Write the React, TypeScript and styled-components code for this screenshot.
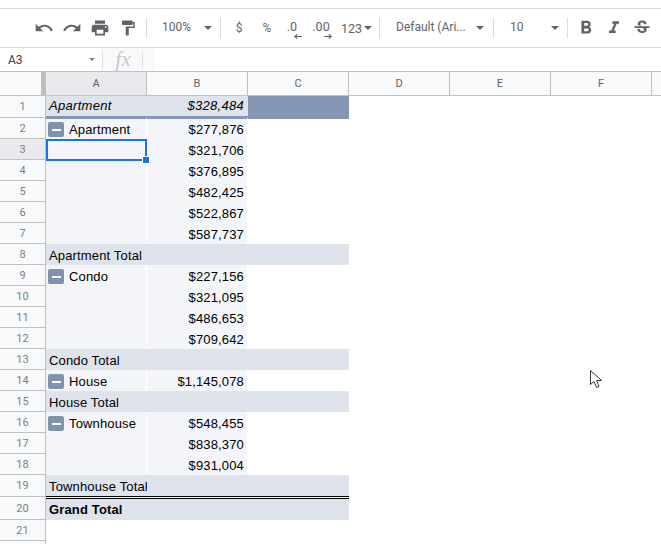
import React from "react";
import styled, { createGlobalStyle } from "styled-components";

const Global = createGlobalStyle`
  html, body { margin: 0; padding: 0; background: #fff; overflow: hidden; }
  #root { width: 661px; height: 544px; overflow: hidden; }
`;

const Page = styled.div`
  position: relative;
  width: 661px;
  height: 544px;
  overflow: hidden;
  padding-top: 8px;
  box-sizing: border-box;
  font-family: "Liberation Sans", Arial, sans-serif;
`;

const Toolbar = styled.div`
  display: flex;
  align-items: center;
  height: 38px;
  padding-left: 30px;
  border-top: 1px solid #dadce0;
  border-bottom: 1px solid #dadce0;
  box-sizing: content-box;
  font-family: Roboto, sans-serif;
  color: #5f6368;
  white-space: nowrap;
`;

const IconSlot = styled.div`
  flex: none;
  width: 28px;
  height: 24px;
  display: flex;
  align-items: center;
  justify-content: center;
  position: relative;
  font-size: 12px;
`;

const Divider = styled.div<{ $left?: number; $right?: number }>`
  flex: none;
  width: 1px;
  height: 20px;
  background: #dadce0;
  margin-left: ${(p) => p.$left ?? 0}px;
  margin-right: ${(p) => p.$right ?? 0}px;
`;

const Select = styled.div<{ $w: number; $pad: number; $caret: number }>`
  flex: none;
  width: ${(p) => p.$w}px;
  padding-left: ${(p) => p.$pad}px;
  padding-right: ${(p) => p.$caret}px;
  box-sizing: border-box;
  display: flex;
  justify-content: space-between;
  align-items: center;
  font-size: 12px;
  height: 24px;
`;

const SelectLabel = styled.span`
  position: relative;
  top: -1px;
`;

const Caret = styled.span<{ $color?: string; $half?: number }>`
  display: inline-block;
  width: 0;
  height: 0;
  border-left: ${(p) => p.$half ?? 4}px solid transparent;
  border-right: ${(p) => p.$half ?? 4}px solid transparent;
  border-top: ${(p) => p.$half ?? 4}px solid ${(p) => p.$color ?? "#5f6368"};
`;

const Decimal = styled.span<{ $shift: number }>`
  position: relative;
  top: -2px;
  left: ${(p) => p.$shift}px;
  font-size: 12.5px;
  color: #5f6368;
`;

const DecimalArrow = styled.svg<{ $right: number }>`
  position: absolute;
  bottom: 1px;
  right: ${(p) => p.$right}px;
`;

const NumberFormat = styled.div`
  flex: none;
  width: 42px;
  padding-left: 4px;
  box-sizing: border-box;
  display: flex;
  align-items: center;
  gap: 2px;
  font-size: 12.5px;
  color: #5f6368;
`;

const FormulaBar = styled.div`
  display: flex;
  height: 23px;
  border-bottom: 1px solid #c0c0c0;
  align-items: stretch;
`;

const NameBox = styled.div`
  flex: none;
  width: 102px;
  padding: 0 7px 0 8px;
  box-sizing: border-box;
  display: flex;
  align-items: center;
  justify-content: space-between;
  font-size: 12px;
  color: #3c4043;
  font-family: Roboto, sans-serif;
`;

const FxBox = styled.div`
  flex: none;
  width: 53px;
  background: #f8f9fa;
  display: flex;
  align-items: center;
  justify-content: space-between;
`;

const FxDivider = styled.div`
  width: 1px;
  height: 16px;
  background: #dadce0;
`;

const FxText = styled.span`
  font-family: "Liberation Serif", serif;
  font-style: italic;
  font-size: 21px;
  color: #c8cacc;
  margin-left: 1px;
`;

const HeaderRow = styled.div`
  display: flex;
  height: 24px;
  background: #f8f9fa;
  border-bottom: 1px solid #c0c0c0;
  box-sizing: border-box;
`;

const Corner = styled.div`
  flex: none;
  width: 46px;
  box-sizing: border-box;
  border-right: 5px solid #bdbdbd;
`;

const ColHead = styled.div<{ $active?: boolean }>`
  flex: none;
  width: 101px;
  box-sizing: border-box;
  border-right: 1px solid #c0c0c0;
  display: flex;
  align-items: center;
  justify-content: center;
  font-family: Roboto, sans-serif;
  font-size: 11px;
  color: #5f6368;
  background: ${(p) => (p.$active ? "#e8eaed" : "transparent")};
`;

const Row = styled.div<{ $h: number }>`
  display: flex;
  height: ${(p) => p.$h}px;
`;

const RowHead = styled.div<{ $active?: boolean }>`
  flex: none;
  width: 46px;
  box-sizing: border-box;
  border-right: 1px solid #c0c0c0;
  border-bottom: 1px solid #c0c0c0;
  background: ${(p) => (p.$active ? "#e8eaed" : "#f8f9fa")};
  display: flex;
  align-items: center;
  justify-content: center;
  font-family: Roboto, sans-serif;
  font-size: 11px;
  color: #7d8084;
`;

const Cell = styled.div<{
  $bg?: string;
  $right?: boolean;
  $bold?: boolean;
  $line?: boolean;
  $topBand?: boolean;
}>`
  flex: none;
  width: 101px;
  box-sizing: border-box;
  display: flex;
  align-items: center;
  gap: 5px;
  padding: 2px 3px 0 3px;
  font-size: 13px;
  letter-spacing: 0.15px;
  color: #000;
  white-space: nowrap;
  overflow: hidden;
  justify-content: ${(p) => (p.$right ? "flex-end" : "flex-start")};
  background: ${(p) => p.$bg ?? "transparent"};
  font-weight: ${(p) => (p.$bold ? 700 : 400)};
  border-bottom: ${(p) => (p.$line ? "1px solid #000" : "none")};
  box-shadow: ${(p) => (p.$topBand ? "inset 0 1px 0 #8496b4" : "none")};
`;

const GroupCell = styled(Cell)`
  background: #f3f5f9;
  border-right: 1px solid #fff;
`;

const HeadingCell = styled(Cell)`
  font-style: italic;
  letter-spacing: 0.3px;
  padding: 0 4px 2px 3px;
  border-bottom: 2px solid #8496b4;
`;

const GrandCell = styled(Cell)`
  box-shadow: inset 0 1px 0 #fff, inset 0 2px 0 #000;
`;

const Collapse = styled.span`
  flex: none;
  width: 16px;
  height: 15px;
  margin-left: -1px;
  border-radius: 2px;
  background: #8093ae;
  display: flex;
  align-items: center;
  justify-content: center;
`;

const CollapseBar = styled.span`
  display: block;
  width: 9px;
  height: 2px;
  background: #fff;
`;

const SelectionBox = styled.div`
  position: absolute;
  left: 46px;
  top: 139px;
  width: 101px;
  height: 22px;
  box-sizing: border-box;
  border: 2px solid #1a73e8;
`;

const SelectionHandle = styled.div`
  position: absolute;
  right: -4px;
  bottom: -4px;
  width: 6px;
  height: 6px;
  background: #1a73e8;
  outline: 1px solid #fff;
`;

const Pointer = styled.svg`
  position: absolute;
  left: 589px;
  top: 369px;
`;

const Icon = ({ d, size = 20 }: { d: string; size?: number }) => (
  <svg width={size} height={size} viewBox="0 0 24 24" fill="#5f6368">
    <path d={d} />
  </svg>
);

const icons = {
  undo: "M12.5 8c-2.65 0-5.05.99-6.9 2.6L2 7v9h9l-3.62-3.62c1.39-1.16 3.16-1.88 5.12-1.88 3.54 0 6.55 2.31 7.6 5.5l2.37-.78C21.08 11.03 17.15 8 12.5 8z",
  redo: "M18.4 10.6C16.55 8.99 14.15 8 11.5 8c-4.65 0-8.58 3.03-9.96 7.22L3.9 16c1.05-3.19 4.05-5.5 7.6-5.5 1.95 0 3.73.72 5.12 1.88L13 16h9V7l-3.6 3.6z",
  print:
    "M19 8H5c-1.66 0-3 1.34-3 3v6h4v4h12v-4h4v-6c0-1.66-1.34-3-3-3zm-3 11H8v-5h8v5zm3-7c-.55 0-1-.45-1-1s.45-1 1-1 1 .45 1 1-.45 1-1 1zm-1-9H6v4h12V3z",
  paint:
    "M18 4V3c0-.55-.45-1-1-1H5c-.55 0-1 .45-1 1v4c0 .55.45 1 1 1h12c.55 0 1-.45 1-1V6h1v4H9v11c0 .55.45 1 1 1h2c.55 0 1-.45 1-1v-9h8V4h-3z",
  bold: "M15.6 10.79c.97-.67 1.65-1.77 1.65-2.79 0-2.26-1.75-4-4-4H7v14h7.04c2.09 0 3.71-1.7 3.71-3.79 0-1.52-.86-2.82-2.15-3.42zM10 6.5h3c.83 0 1.5.67 1.5 1.5s-.67 1.5-1.5 1.5h-3v-3zm3.5 9H10v-3h3.5c.83 0 1.5.67 1.5 1.5s-.67 1.5-1.5 1.5z",
  italic: "M10 4v3h2.21l-3.42 8H6v3h8v-3h-2.21l3.42-8H18V4z",
  strike:
    "M7.24 8.75c-.26-.48-.39-1.03-.39-1.67 0-.61.13-1.16.4-1.67.26-.5.63-.93 1.11-1.29.48-.35 1.05-.63 1.7-.83.66-.19 1.39-.29 2.18-.29.81 0 1.54.11 2.21.34.66.22 1.23.54 1.69.94.47.4.83.88 1.08 1.43.25.55.38 1.15.38 1.81h-3.01c0-.31-.05-.59-.15-.85-.09-.27-.24-.49-.44-.68-.2-.19-.45-.33-.75-.44-.3-.1-.66-.16-1.06-.16-.39 0-.74.04-1.03.13-.29.09-.53.21-.72.36-.19.16-.34.34-.44.55-.1.21-.15.43-.15.66 0 .48.25.88.74 1.21.38.25.77.48 1.41.7H7.39c-.05-.08-.11-.17-.15-.25zM21 12v-2H3v2h9.62c.18.07.4.14.55.2.37.17.66.34.87.51.21.17.35.36.43.57.07.2.11.43.11.69 0 .23-.05.45-.14.66-.09.2-.23.38-.42.53-.19.15-.42.26-.71.35-.29.08-.63.13-1.01.13-.43 0-.83-.04-1.18-.13s-.66-.23-.91-.42c-.25-.19-.45-.44-.59-.75-.14-.31-.25-.76-.25-1.21H6.4c0 .55.08 1.13.24 1.58.16.45.37.85.65 1.21.28.35.6.66.98.92.37.26.78.48 1.22.65.44.17.9.3 1.38.39.48.08.96.13 1.44.13.8 0 1.53-.09 2.18-.28s1.21-.45 1.67-.79c.46-.34.82-.77 1.07-1.27s.38-1.07.38-1.71c0-.6-.1-1.14-.31-1.61-.05-.11-.11-.23-.17-.33H21z",
};

type Item =
  | { kind: "group"; label: string; value: string }
  | { kind: "value"; value: string }
  | { kind: "total"; label: string };

const items: Item[] = [
  { kind: "group", label: "Apartment", value: "$277,876" },
  { kind: "value", value: "$321,706" },
  { kind: "value", value: "$376,895" },
  { kind: "value", value: "$482,425" },
  { kind: "value", value: "$522,867" },
  { kind: "value", value: "$587,737" },
  { kind: "total", label: "Apartment Total" },
  { kind: "group", label: "Condo", value: "$227,156" },
  { kind: "value", value: "$321,095" },
  { kind: "value", value: "$486,653" },
  { kind: "value", value: "$709,642" },
  { kind: "total", label: "Condo Total" },
  { kind: "group", label: "House", value: "$1,145,078" },
  { kind: "total", label: "House Total" },
  { kind: "group", label: "Townhouse", value: "$548,455" },
  { kind: "value", value: "$838,370" },
  { kind: "value", value: "$931,004" },
];

const TOTAL_BG = "#dfe3ec";

const DecimalIcon = ({ text, flip, shift, right }: { text: string; flip?: boolean; shift: number; right: number }) => (
  <IconSlot>
    <Decimal $shift={shift}>{text}</Decimal>
    <DecimalArrow $right={right} width="8" height="5" viewBox="0 0 8 5" fill="none" stroke="#5f6368" strokeWidth="1.2">
      {flip ? <path d="M0 2.5h7M4.8 .4L7.2 2.5 4.8 4.6" /> : <path d="M8 2.5H1M3.2 .4L.8 2.5 3.2 4.6" />}
    </DecimalArrow>
  </IconSlot>
);

export default function App() {
  return (
    <Page>
      <Global />
      <Toolbar>
        <IconSlot><Icon d={icons.undo} /></IconSlot>
        <IconSlot><Icon d={icons.redo} /></IconSlot>
        <IconSlot><Icon d={icons.print} /></IconSlot>
        <IconSlot><Icon d={icons.paint} size={18} /></IconSlot>
        <Divider $left={4} />
        <Select $w={73} $pad={15} $caret={8}>
          <SelectLabel>100%</SelectLabel>
          <Caret />
        </Select>
        <Divider $right={4} />
        <IconSlot>$</IconSlot>
        <IconSlot>%</IconSlot>
        <DecimalIcon text=".0" shift={-3} right={7} />
        <DecimalIcon text=".00" flip shift={-2} right={5} />
        <NumberFormat>
          <span>123</span>
          <Caret />
        </NumberFormat>
        <Divider />
        <Select $w={113} $pad={16} $caret={9}>
          <SelectLabel>Default (Ari...</SelectLabel>
          <Caret />
        </Select>
        <Divider />
        <Select $w={73} $pad={16} $caret={8}>
          <SelectLabel>10</SelectLabel>
          <Caret />
        </Select>
        <Divider $right={4} />
        <IconSlot><Icon d={icons.bold} size={22} /></IconSlot>
        <IconSlot><Icon d={icons.italic} /></IconSlot>
        <IconSlot><Icon d={icons.strike} /></IconSlot>
      </Toolbar>

      <FormulaBar>
        <NameBox>
          <span>A3</span>
          <Caret $color="#80868b" $half={3} />
        </NameBox>
        <FxBox>
          <FxDivider />
          <FxText>fx</FxText>
          <FxDivider />
          <span />
        </FxBox>
      </FormulaBar>

      <HeaderRow>
        <Corner />
        <ColHead $active>A</ColHead>
        <ColHead>B</ColHead>
        <ColHead>C</ColHead>
        <ColHead>D</ColHead>
        <ColHead>E</ColHead>
        <ColHead>F</ColHead>
      </HeaderRow>

      <Row $h={22}>
        <RowHead>1</RowHead>
        <HeadingCell $bg={TOTAL_BG}>Apartment</HeadingCell>
        <HeadingCell $bg={TOTAL_BG} $right>$328,484</HeadingCell>
        <Cell $bg="#8496b4" />
      </Row>

      {items.map((item, i) => {
        const n = i + 2;
        const band = i === 0;
        if (item.kind === "total") {
          return (
            <Row $h={21} key={n}>
              <RowHead>{n}</RowHead>
              <Cell $bg={TOTAL_BG}>{item.label}</Cell>
              <Cell $bg={TOTAL_BG} />
              <Cell $bg={TOTAL_BG} />
            </Row>
          );
        }
        return (
          <Row $h={21} key={n}>
            <RowHead $active={n === 3}>{n}</RowHead>
            <GroupCell $topBand={band}>
              {item.kind === "group" && (
                <>
                  <Collapse><CollapseBar /></Collapse>
                  <span>{item.label}</span>
                </>
              )}
            </GroupCell>
            <GroupCell $right $topBand={band}>{item.value}</GroupCell>
            {band && <Cell $topBand />}
          </Row>
        );
      })}

      <Row $h={22}>
        <RowHead>19</RowHead>
        <Cell $bg={TOTAL_BG} $line>Townhouse Total</Cell>
        <Cell $bg={TOTAL_BG} $line />
        <Cell $bg={TOTAL_BG} $line />
      </Row>
      <Row $h={23}>
        <RowHead>20</RowHead>
        <GrandCell $bg={TOTAL_BG} $bold>Grand Total</GrandCell>
        <GrandCell $bg={TOTAL_BG} />
        <GrandCell $bg={TOTAL_BG} />
      </Row>
      <Row $h={21}>
        <RowHead>21</RowHead>
      </Row>
      <Row $h={21}>
        <RowHead />
      </Row>

      <SelectionBox>
        <SelectionHandle />
      </SelectionBox>

      <Pointer width="14" height="20" viewBox="0 0 14 20">
        <path d="M1.5 1.5V15.5L5 12.5L7.5 18.5L10 17.5L7.5 11.5H12.5Z" fill="#fff" stroke="#333" strokeWidth="1" />
      </Pointer>
    </Page>
  );
}
